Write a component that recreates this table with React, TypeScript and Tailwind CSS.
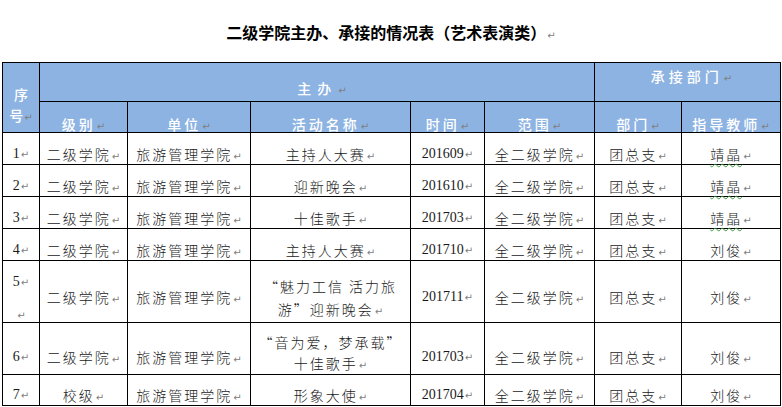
import React from 'react';

const R = () => (
  <span className="ml-[1px] inline-block align-baseline text-[10px] font-normal leading-none tracking-normal text-[#808080] [font-family:'DejaVu_Sans',sans-serif]">↵</span>
);

const Spell = ({ children }: { children: React.ReactNode }) => (
  <span className="underline decoration-wavy decoration-[#3a9a3a] decoration-[1px] underline-offset-[3px]">{children}</span>
);

type Row = {
  no: string;
  level: string;
  unit: string;
  name: React.ReactNode;
  time: string;
  scope: string;
  dept: string;
  teacher: React.ReactNode;
};

const rows: Row[] = [
  { no: '1', level: '二级学院', unit: '旅游管理学院', name: '主持人大赛', time: '201609', scope: '全二级学院', dept: '团总支', teacher: <Spell>靖晶</Spell> },
  { no: '2', level: '二级学院', unit: '旅游管理学院', name: '迎新晚会', time: '201610', scope: '全二级学院', dept: '团总支', teacher: <Spell>靖晶</Spell> },
  { no: '3', level: '二级学院', unit: '旅游管理学院', name: '十佳歌手', time: '201703', scope: '全二级学院', dept: '团总支', teacher: <Spell>靖晶</Spell> },
  { no: '4', level: '二级学院', unit: '旅游管理学院', name: '主持人大赛', time: '201710', scope: '全二级学院', dept: '团总支', teacher: '刘俊' },
];

const td = 'border border-black p-0 text-center';
const bottom = 'align-bottom leading-[20px]';
const num = "tracking-normal [font-family:'Liberation_Serif',serif]";

export default function App() {
  return (
    <div className="h-[407px] w-[782px] overflow-hidden bg-white text-[14px] text-[#1a1a1a] [font-family:'Noto_Sans_CJK_SC',sans-serif]">
      <h1 className="h-[62px] pt-[21px] text-center text-[16px] font-bold leading-[22px] text-black">
        二级学院主办、承接的情况表（艺术表演类）<R />
      </h1>
      <div className="pl-[2px]">
        <table className="w-[778px] table-fixed border-collapse tracking-[2px]">
          <colgroup>
            <col className="w-[37px]" />
            <col className="w-[88px]" />
            <col className="w-[123px]" />
            <col className="w-[160px]" />
            <col className="w-[74px]" />
            <col className="w-[110px]" />
            <col className="w-[87px]" />
            <col className="w-[99px]" />
          </colgroup>
          <thead className="bg-[#8db3e2] font-medium text-white">
            <tr className="h-[39px]">
              <td rowSpan={2} className={`${td} align-bottom pb-[6px] leading-[21px] tracking-normal`}>
                序<br />号<R />
              </td>
              <td colSpan={5} className={`${td} align-bottom pb-[3px] pl-[10px] leading-[20px] tracking-[6px]`}>
                主办<R />
              </td>
              <td colSpan={2} className={`${td} align-top pt-[3px] pl-[8px] leading-[20px] tracking-[4px]`}>
                承接部门<R />
              </td>
            </tr>
            <tr className="h-[31px]">
              <td className={`${td} align-bottom leading-[16px] tracking-[3px]`}>级别<R /></td>
              <td className={`${td} align-bottom leading-[16px] tracking-[3px]`}>单位<R /></td>
              <td className={`${td} align-bottom leading-[16px] tracking-[3px]`}>活动名称<R /></td>
              <td className={`${td} align-bottom leading-[16px] tracking-[3px]`}>时间<R /></td>
              <td className={`${td} align-bottom leading-[16px] tracking-[3px]`}>范围<R /></td>
              <td className={`${td} align-bottom leading-[16px] tracking-[3px]`}>部门<R /></td>
              <td className={`${td} align-bottom leading-[16px] tracking-[3px]`}>指导教师<R /></td>
            </tr>
          </thead>
          <tbody className="font-light">
            {rows.map((r) => (
              <tr key={r.no} className="h-[32px]">
                <td className={`${td} ${bottom} ${num}`}>{r.no}<R /></td>
                <td className={`${td} ${bottom}`}>{r.level}<R /></td>
                <td className={`${td} ${bottom}`}>{r.unit}<R /></td>
                <td className={`${td} ${bottom}`}>{r.name}<R /></td>
                <td className={`${td} ${bottom} ${num}`}>{r.time}<R /></td>
                <td className={`${td} ${bottom}`}>{r.scope}<R /></td>
                <td className={`${td} ${bottom}`}>{r.dept}<R /></td>
                <td className={`${td} ${bottom}`}>{r.teacher}<R /></td>
              </tr>
            ))}
            <tr className="h-[62px]">
              <td className={`${td} align-top pt-[11px] ${num}`}>
                <div className="leading-[20px]">5<R /></div>
                <div className="mt-[16px] leading-[14px]"><R /></div>
              </td>
              <td className={`${td} align-middle pt-[10px] leading-[20px]`}>二级学院<R /></td>
              <td className={`${td} align-middle pt-[10px] leading-[20px]`}>旅游管理学院<R /></td>
              <td className={`${td} align-middle pt-[12px] leading-[23px]`}>
                “魅力工信 活力旅<br />游”迎新晚会<R />
              </td>
              <td className={`${td} align-middle pt-[10px] leading-[20px] ${num}`}>201711<R /></td>
              <td className={`${td} align-middle pt-[10px] leading-[20px]`}>全二级学院<R /></td>
              <td className={`${td} align-middle pt-[10px] leading-[20px]`}>团总支<R /></td>
              <td className={`${td} align-middle pt-[10px] leading-[20px]`}>刘俊<R /></td>
            </tr>
            <tr className="h-[52px]">
              <td className={`${td} align-middle pt-[16px] leading-[20px] ${num}`}>6<R /></td>
              <td className={`${td} align-middle pt-[16px] leading-[20px]`}>二级学院<R /></td>
              <td className={`${td} align-middle pt-[16px] leading-[20px]`}>旅游管理学院<R /></td>
              <td className={`${td} align-middle pt-[9px] leading-[21px]`}>
                “音为爱，梦承载”<br />十佳歌手<R />
              </td>
              <td className={`${td} align-middle pt-[16px] leading-[20px] ${num}`}>201703<R /></td>
              <td className={`${td} align-middle pt-[16px] leading-[20px]`}>全二级学院<R /></td>
              <td className={`${td} align-middle pt-[16px] leading-[20px]`}>团总支<R /></td>
              <td className={`${td} align-middle pt-[16px] leading-[20px]`}>刘俊<R /></td>
            </tr>
            <tr className="h-[31px]">
              <td className={`${td} ${bottom} ${num}`}>7<R /></td>
              <td className={`${td} ${bottom}`}>校级<R /></td>
              <td className={`${td} ${bottom}`}>旅游管理学院<R /></td>
              <td className={`${td} ${bottom}`}>形象大使<R /></td>
              <td className={`${td} ${bottom} ${num}`}>201704<R /></td>
              <td className={`${td} ${bottom}`}>全二级学院<R /></td>
              <td className={`${td} ${bottom}`}>团总支<R /></td>
              <td className={`${td} ${bottom}`}>刘俊<R /></td>
            </tr>
          </tbody>
        </table>
      </div>
    </div>
  );
}
